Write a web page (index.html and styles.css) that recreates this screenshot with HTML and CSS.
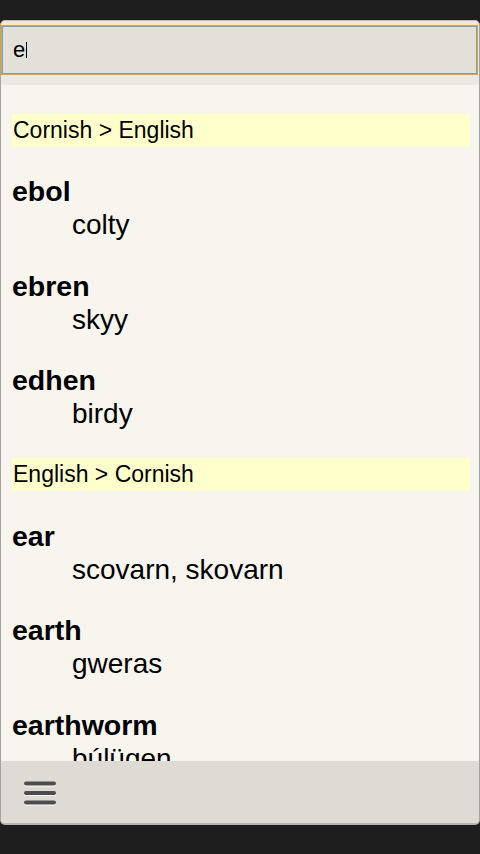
FILE: index.html
```html
<!DOCTYPE html>
<html lang="en">
<head>
    <meta charset="UTF-8">
    <title>Cornish dictionary</title>
    <link rel="stylesheet" href="styles.css">
</head>
<body>
    <div class="window">
        <div class="search">
            <div class="search__box"><span class="search__text">e</span><span class="search__caret"></span></div>
        </div>

        <div class="results">
            <div class="results__header">Cornish &gt; English</div>
            <div class="entry">
                <div class="entry__term">ebol</div>
                <div class="entry__trans">colty</div>
            </div>
            <div class="entry">
                <div class="entry__term">ebren</div>
                <div class="entry__trans">skyy</div>
            </div>
            <div class="entry">
                <div class="entry__term">edhen</div>
                <div class="entry__trans">birdy</div>
            </div>

            <div class="results__header">English &gt; Cornish</div>
            <div class="entry">
                <div class="entry__term">ear</div>
                <div class="entry__trans">scovarn, skovarn</div>
            </div>
            <div class="entry">
                <div class="entry__term">earth</div>
                <div class="entry__trans">gweras</div>
            </div>
            <div class="entry">
                <div class="entry__term">earthworm</div>
                <div class="entry__trans">búlügen</div>
            </div>
        </div>

        <div class="toolbar">
            <span class="toolbar__menu">
                <svg width="34" height="28" viewBox="0 0 34 28">
                    <g stroke-linecap="round" stroke-width="4">
                        <path d="M3 4.5h28M3 14h28M3 23.5h28" stroke="#fff" transform="translate(0 1)"/>
                        <path d="M3 4.5h28M3 14h28M3 23.5h28" stroke="#4d4d4d"/>
                    </g>
                </svg>
            </span>
        </div>
    </div>
</body>
</html>
```

FILE: styles.css
```css
html, body{
    margin: 0;
    padding: 0;
}
body{
    background: #1e1e1e;
    font-family: "Liberation Sans", Arial, sans-serif;
    color: #000;
    height: 854px;
    overflow: hidden;
}
.window{
    margin-top: 20px;
    height: 802px;
    border: 1px solid #a3a3a3;
    border-top-color: #b9b9b9;
    border-bottom: 2px solid #b4b4b4;
    border-radius: 5px;
    background: #ece9e2;
    display: flex;
    flex-direction: column;
    overflow: hidden;
}
.search{
    padding: 5px 2px 11px 1px;
}
.search__box{
    height: 46px;
    border: 1px solid #6fa1c4;
    box-shadow: 0 0 0 1px #f0a21e;
    background: #e3e0d9;
    display: flex;
    align-items: center;
    padding-left: 10px;
}
.search__text{
    font-size: 22px;
    line-height: 1;
}
.search__caret{
    display: inline-block;
    width: 0;
    height: 16px;
    border-left: 1px solid #000;
    margin-left: 1px;
}
.results{
    flex: 1;
    background: #f8f5ef;
    overflow: hidden;
    padding-top: 0.5px;
}
.results__header{
    margin: 28px 9px 0 11px;
    height: 33px;
    line-height: 33px;
    background: #ffffcc;
    font-size: 23px;
    padding-left: 1px;
}
.entry{
    margin-top: 28.5px;
    padding-left: 11px;
}
.entry__term{
    font-size: 28.5px;
    font-weight: bold;
    line-height: 33px;
}
.entry__trans{
    font-size: 28px;
    line-height: 33px;
    padding-left: 60px;
}
.toolbar{
    height: 62px;
    background: #dedbd4;
    display: flex;
    align-items: center;
    padding-left: 22px;
}
.toolbar__menu{
    display: flex;
    margin-top: 1px;
}
```
